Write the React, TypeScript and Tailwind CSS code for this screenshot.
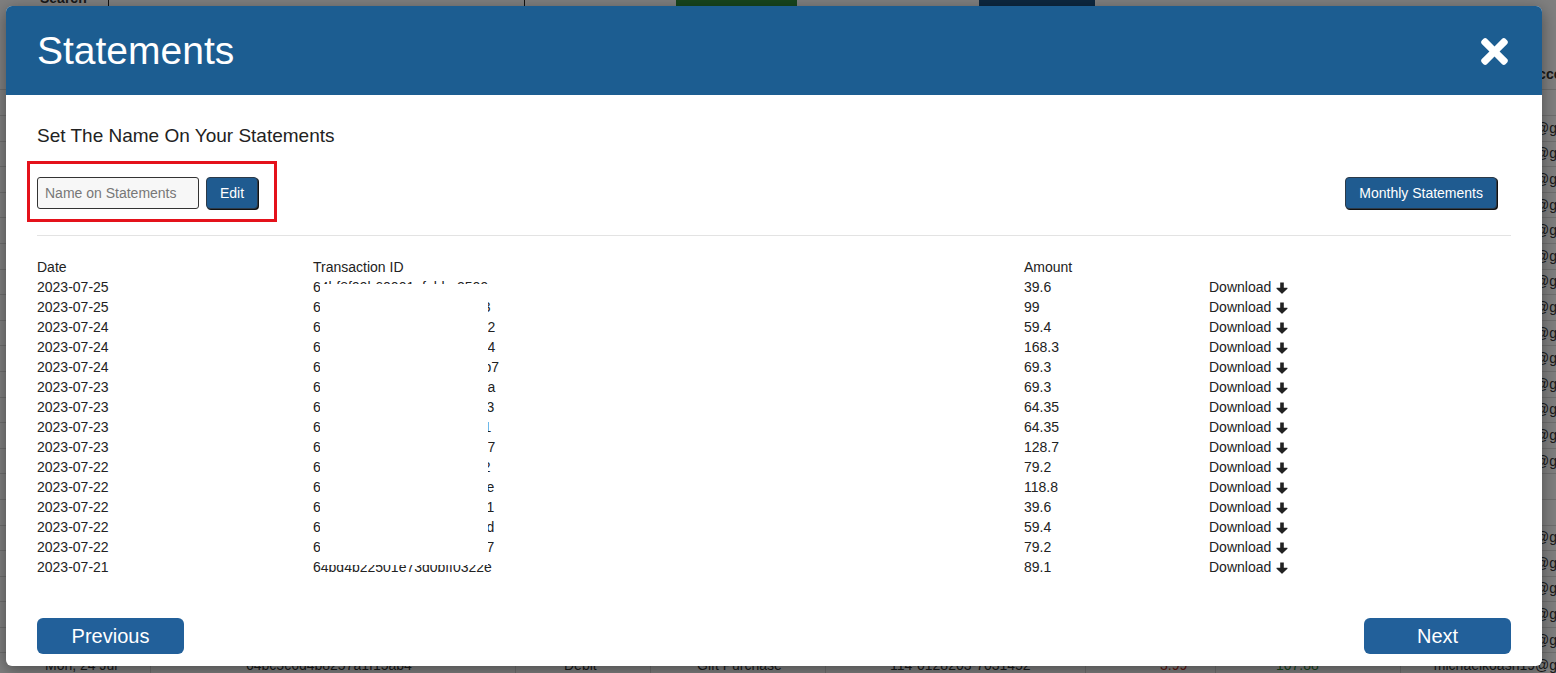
import { FaTimes } from "react-icons/fa";

const rows = [
  ["2023-07-25", "64bf8f99b60001efabba2509", "39.6"],
  ["2023-07-25", "64bf7c21a9e0043d1c8f7a13", "99"],
  ["2023-07-24", "64be9a14c7f2001b5e3d08d2", "59.4"],
  ["2023-07-24", "64be6d02b41c0027a9f153b4", "168.3"],
  ["2023-07-24", "64be3b87e51a003c72d4e0b7", "69.3"],
  ["2023-07-23", "64bd9e30f6d20019c48a27ba", "69.3"],
  ["2023-07-23", "64bd7a51c3e8004f16b9d2c3", "64.35"],
  ["2023-07-23", "64bd52f4a0b7002e83c6f901", "64.35"],
  ["2023-07-23", "64bd1c98d2f50031ea47b5e7", "128.7"],
  ["2023-07-22", "64bcf3a7e9c1001d72b48f62", "79.2"],
  ["2023-07-22", "64bcd16fb28e0042c9a57d3e", "118.8"],
  ["2023-07-22", "64bcae20c5d7003a14f8e6b1", "39.6"],
  ["2023-07-22", "64bc8b49f1a20026d7c3e09d", "59.4"],
  ["2023-07-22", "64bc6e13a8d4001fb25c9e77", "79.2"],
  ["2023-07-21", "64bd4b22501e73d0bff0322e", "89.1"],
];

const bgRows = [
  "jwalters88", "klindgren2019", "dsantos21", "tmarshall4567", "rebeccang1990",
  "paulhendry555", "aokafor1209", "lucywright777", "sambrooks4321", "nhartley12",
  "jmorales77", "ellencho2020", "bkowalski99", "mfarrell12345", "", "",
  "gpierce123", "hrosen1212", "tpatel98765", "cwinters543", "dmorgan1122",
  "michaelkoash19",
];

function BackgroundPage() {
  return (
    <div className="absolute inset-0 bg-white text-[14px] text-[#333]">
      <div className="-mt-[22px] flex h-[40px] items-start">
        <div className="w-[108px] shrink-0 pl-[40px] pt-[10px] font-bold">Search</div>
        <div className="h-[32px] w-[417px] shrink-0 border border-[#222] px-[10px] pt-[6px] text-[#999]">
          Search Orders
        </div>
        <div className="w-[151px] shrink-0" />
        <div className="h-[30px] w-[121px] shrink-0 bg-[#2e8b3a] pt-[6px] text-center text-white">
          Load Balance
        </div>
        <div className="w-[182px] shrink-0" />
        <div className="h-[30px] w-[116px] shrink-0 bg-[#1b4f7f] pt-[6px] text-center text-white">
          Statements
        </div>
      </div>
      <div className="mt-[42px] flex h-[30px] items-center whitespace-nowrap border-b border-[#ddd] font-bold">
        <span className="pl-[1528px]">Account</span>
      </div>
      <div className="mt-[25px] border-t border-[#ddd]">
        {bgRows.map((e, i) => (
          <div
            key={i}
            className="flex h-[25.6px] items-center whitespace-nowrap border-b border-[#ddd]"
          >
            <div className="w-[150px] shrink-0 pl-[45px]">Mon, 24 Jul</div>
            <div className="w-[365px] shrink-0 border-l border-[#ddd] pl-[95px]">
              64bc5c6d4b8257a1f15ab4
            </div>
            <div className="w-[135px] shrink-0 border-l border-[#ddd] pl-[48px]">Debit</div>
            <div className="w-[175px] shrink-0 border-l border-[#ddd] pl-[46px]">
              Gift Purchase
            </div>
            <div className="w-[260px] shrink-0 border-l border-[#ddd] pl-[64px]">
              114-0128203-7031452
            </div>
            <div className="w-[130px] shrink-0 border-l border-[#ddd] pl-[74px] text-[#c0392b]">
              3.99
            </div>
            <div className="w-[185px] shrink-0 border-l border-[#ddd] pl-[60px] text-[#2e8b3a]">
              107.88
            </div>
            <div className="flex shrink-0 border-l border-[#ddd] pl-[16px]">
              {e && (
                <>
                  <span className="w-[118px] text-right">{e}</span>
                  <span>@gmail.com</span>
                </>
              )}
            </div>
          </div>
        ))}
      </div>
    </div>
  );
}

function DarkButton({ children }: { children: React.ReactNode }) {
  return (
    <button
      type="button"
      className="h-[32px] rounded-[4px] border border-[#2c3a48] bg-[#1f5b90] px-[13px] text-[14px] text-white shadow-[1px_1px_0_#111]"
    >
      {children}
    </button>
  );
}

function ArrowDown() {
  return (
    <svg width="12" height="12" viewBox="0 0 12 12" className="text-[#222]">
      <path
        d="M4.2 0.6h3.6v5.2h3.2c0.5 0 0.7 0.5 0.4 0.9L6.4 11.5c-0.2 0.3-0.6 0.3-0.8 0L0.6 6.7c-0.3-0.4-0.1-0.9 0.4-0.9h3.2z"
        fill="currentColor"
      />
    </svg>
  );
}

export default function App() {
  return (
    <div
      className="relative h-[673px] w-full overflow-hidden"
      style={{ fontFamily: '"Liberation Sans", Arial, sans-serif' }}
    >
      <BackgroundPage />
      <div className="absolute inset-0 bg-black/50" />

      <div className="absolute left-[6px] top-[6px] flex h-[660px] w-[1536px] flex-col overflow-hidden rounded-[6px] bg-white shadow-[0_4px_16px_rgba(0,0,0,0.4)]">
        <div className="flex h-[89px] shrink-0 items-center justify-between bg-[#1c5d91] pl-[31px] pr-[28px]">
          <h1 className="text-[39px] leading-none text-white">Statements</h1>
          <FaTimes className="mt-[1px] text-white" size={39} />
        </div>

        <div className="flex flex-1 flex-col px-[31px]">
          <p className="mt-[30px] text-[19px] leading-[22px] text-[#222]">
            Set The Name On Your Statements
          </p>

          <div className="mt-[30px] flex items-start justify-between">
            <div className="-ml-[10px] -mt-[16px] flex items-center gap-[7px] border-[3px] border-[#e4121b] pb-[10px] pl-[7px] pr-[16px] pt-[13px]">
              <input
                placeholder="Name on Statements"
                className="h-[32px] w-[162px] rounded-[3px] border border-[#333] bg-[#f7f7f7] px-[7px] text-[14px] text-[#333] outline-none placeholder:text-[#777]"
              />
              <DarkButton>Edit</DarkButton>
            </div>
            <div className="mr-[14px]">
              <DarkButton>Monthly Statements</DarkButton>
            </div>
          </div>

          <hr className="mt-[13px] border-t border-[#e3e3e3]" />

          <div className="relative mt-[21px] text-[14px] text-[#222]">
            <div className="grid h-[20px] grid-cols-[276px_711px_185px_1fr] items-center">
              <span>Date</span>
              <span>Transaction ID</span>
              <span>Amount</span>
              <span />
            </div>
            {rows.map(([d, id, amt], i) => (
              <div
                key={i}
                className="grid h-[20px] grid-cols-[276px_711px_185px_1fr] items-center"
              >
                <span>{d}</span>
                <span>{id}</span>
                <span>{amt}</span>
                <span className="flex items-center gap-[5px]">
                  Download <ArrowDown />
                </span>
              </div>
            ))}
            <div className="absolute left-[283px] top-[27px] h-[281px] w-[168px] bg-white" />
          </div>

          <div className="mb-[12px] mt-auto flex justify-between">
            <button
              type="button"
              className="h-[36px] w-[147px] rounded-[6px] bg-[#22609a] text-[20px] text-white"
            >
              Previous
            </button>
            <button
              type="button"
              className="h-[36px] w-[147px] rounded-[6px] bg-[#22609a] text-[20px] text-white"
            >
              Next
            </button>
          </div>
        </div>
      </div>
    </div>
  );
}
